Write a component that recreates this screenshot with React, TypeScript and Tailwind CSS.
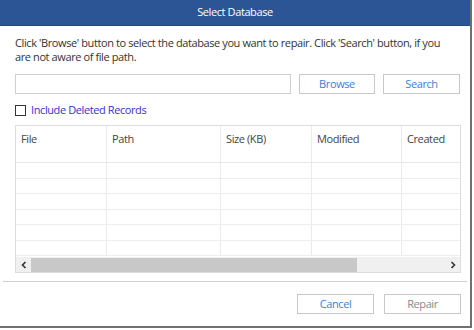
import type { FC } from "react";

const cols = [
  { name: "File", w: "w-[91px]" },
  { name: "Path", w: "w-[114px]" },
  { name: "Size (KB)", w: "w-[91px]" },
  { name: "Modified", w: "w-[90px]" },
  { name: "Created", w: "w-[58px]" },
];

const rows = [0, 1, 2, 3, 4, 5];

const App: FC = () => {
  return (
    <div
      className="w-[474px] h-[330px] bg-white text-[#333] tracking-[-0.4px]"
      style={{ fontFamily: '"Open Sans", "Noto Sans", sans-serif' }}
    >
      <div className="w-[472px] h-[328px] border-r-2 border-b-2 border-[#707070] flex flex-col">
        {/* TITLE BAR */}
        <div className="h-[26px] bg-[#2c5596] border-b border-[#24487f] flex items-center justify-center text-white text-[11px]">
          Select Database
        </div>

        <div className="pl-[15px] pr-[9px] pt-[10px] flex flex-col">
          <p className="text-[11px] leading-[14px] whitespace-nowrap">
            Click 'Browse' button to select the database you want to repair. Click 'Search' button, if you
            <br />
            are not aware of file path.
          </p>

          {/* PATH ROW */}
          <div className="flex gap-2 mt-[10px]">
            <div className="w-[276px] h-[20px] border border-[#cfcfcf]" />
            <button className="w-[76px] h-[20px] border border-[#c8c8c8] text-[11px] text-[#3b7fd4]">
              Browse
            </button>
            <button className="w-[77px] h-[20px] border border-[#c8c8c8] text-[11px] text-[#3b7fd4]">
              Search
            </button>
          </div>

          {/* CHECKBOX */}
          <div className="flex items-center gap-[5px] mt-[10px] h-[12px]">
            <div className="w-[11px] h-[11px] border border-[#333]" />
            <span className="text-[11px] text-[#3434c8]">Include Deleted Records</span>
          </div>

          {/* TABLE */}
          <div className="mt-[9px] w-[446px] h-[148px] border border-[#dcdcdc] flex flex-col overflow-hidden">
            <div className="flex h-[37px] border-b border-[#e8e8e8]">
              {cols.map((c, i) => (
                <div
                  key={c.name}
                  className={`${c.w} shrink-0 pl-[5px] pt-[5px] text-[11px] text-[#444] ${i < 4 ? "border-r border-[#ebebeb]" : ""}`}
                >
                  {c.name}
                </div>
              ))}
            </div>
            {rows.map((r) => (
              <div key={r} className="flex h-[15.5px] border-b border-[#ededed]">
                {cols.map((c, i) => (
                  <div
                    key={c.name}
                    className={`${c.w} shrink-0 ${i < 4 ? "border-r border-[#ebebeb]" : ""}`}
                  />
                ))}
              </div>
            ))}
            {/* SCROLLBAR */}
            <div className="mt-auto h-[15px] bg-[#f0f0f0] flex items-center">
              <div className="w-[15px] flex justify-center">
                <svg width="6" height="8" viewBox="0 0 6 8">
                  <path d="M4.5 1 L1.5 4 L4.5 7" stroke="#333" strokeWidth="1.6" fill="none" />
                </svg>
              </div>
              <div className="w-[326px] h-[14px] bg-[#c8c8c8]" />
              <div className="flex-1" />
              <div className="w-[15px] flex justify-center">
                <svg width="6" height="8" viewBox="0 0 6 8">
                  <path d="M1.5 1 L4.5 4 L1.5 7" stroke="#333" strokeWidth="1.6" fill="none" />
                </svg>
              </div>
            </div>
          </div>
        </div>

        {/* SEPARATOR */}
        <div className="mt-[8px] mx-[3px] h-px bg-[#cfcfcf]" />

        {/* FOOTER BUTTONS */}
        <div className="flex justify-end gap-[10px] pr-[9px] mt-[12px]">
          <button className="w-[77px] h-[20px] border border-[#c8c8c8] text-[11px] text-[#3b7fd4]">
            Cancel
          </button>
          <button className="w-[77px] h-[20px] border border-[#c8c8c8] text-[11px] text-[#888]">
            Repair
          </button>
        </div>
      </div>
    </div>
  );
};

export default App;
